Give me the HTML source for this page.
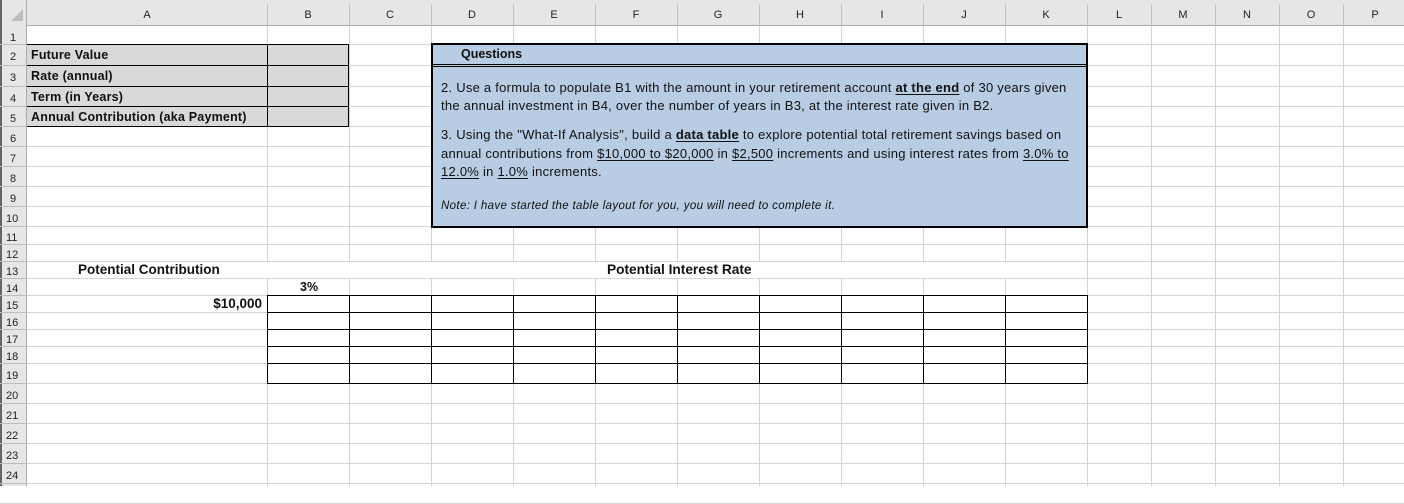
<!DOCTYPE html>
<html><head><meta charset="utf-8">
<style>
body{margin:0;width:1404px;height:486px;overflow:hidden;background:#fff;position:relative;font-family:"Liberation Sans",Arial,sans-serif}
.a{position:absolute}
.hl{position:absolute;height:1px;background:#d4d4d4}
.vl{position:absolute;width:1px;background:#d4d4d4}
.ch{position:absolute;top:0;height:26px;line-height:30px;text-align:center;font-size:11px;color:#222}
.rh{position:absolute;left:0;width:27px;font-size:11px;color:#222;padding-left:10px;box-sizing:border-box}
.lbl{position:absolute;font-weight:bold;font-size:12.5px;color:#111;letter-spacing:0.2px;white-space:nowrap}
.bx{position:absolute;font-size:13px;color:#111;letter-spacing:0.25px;white-space:nowrap}
.lw{position:absolute;font-weight:bold;font-size:13.5px;color:#111;white-space:nowrap}
u{text-underline-offset:2px}
</style></head><body>
<div class="a" style="left:0;top:0;width:1404px;height:26px;background:#e6e6e6;border-bottom:1px solid #ababab;box-sizing:border-box"></div>
<div class="a" style="left:0;top:0;width:27px;height:486px;background:#e6e6e6;border-right:1px solid #ababab;box-sizing:border-box"></div>
<div class="a" style="left:0;top:0;width:2px;height:486px;background:#666"></div>
<svg class="a" style="left:10px;top:8px" width="14" height="14"><polygon points="13,1 13,13 1,13" fill="#bdbdbd"/></svg>
<div id="g"></div>

<div class="a" style="left:27px;top:44px;width:322px;height:82px;background:#d9d9d9"></div>
<div class="a" style="left:27px;top:44px;width:322px;height:83px;border:1px solid #000;border-left:none;box-sizing:border-box"></div>
<div class="a" style="left:27px;top:65px;width:322px;height:1px;background:#000"></div>
<div class="a" style="left:27px;top:86px;width:322px;height:1px;background:#000"></div>
<div class="a" style="left:27px;top:106px;width:322px;height:1px;background:#000"></div>
<div class="a" style="left:267px;top:44px;width:1px;height:82px;background:#000"></div>
<div class="lbl" style="left:31px;top:48px">Future Value</div>
<div class="lbl" style="left:31px;top:69px">Rate (annual)</div>
<div class="lbl" style="left:31px;top:90px">Term (in Years)</div>
<div class="lbl" style="left:31px;top:110px">Annual Contribution (aka Payment)</div>

<div class="a" style="left:431px;top:43px;width:657px;height:185px;background:#b8cce4;border:2px solid #000;box-sizing:border-box"></div>
<div class="a" style="left:432px;top:64px;width:655px;height:1px;background:#000"></div>
<div class="a" style="left:432px;top:66px;width:655px;height:1px;background:#000"></div>
<div class="bx" style="left:461px;top:47px;font-weight:bold;font-size:12.5px;letter-spacing:0">Questions</div>
<div class="bx" style="left:441px;top:80px">2. Use a formula to populate B1 with the amount in your retirement account <b><u>at the end</u></b> of 30 years given</div>
<div class="bx" style="left:441px;top:98px">the annual investment in B4, over the number of years in B3, at the interest rate given in B2.</div>
<div class="bx" style="left:441px;top:127px">3. Using the "What-If Analysis", build a <b><u>data table</u></b> to explore potential total retirement savings based on</div>
<div class="bx" style="left:441px;top:146px">annual contributions from <u>$10,000 to $20,000</u> in <u>$2,500</u> increments and using interest rates from <u>3.0% to</u></div>
<div class="bx" style="left:441px;top:164px"><u>12.0%</u> in <u>1.0%</u> increments.</div>
<div class="bx" style="left:441px;top:200px;font-style:italic;font-size:11.5px;letter-spacing:0.35px">Note: I have started the table layout for you, you will need to complete it.</div>

<div class="lw" style="left:78px;top:262px">Potential Contribution</div>
<div class="lw" style="left:607px;top:262px;font-size:13.7px">Potential Interest Rate</div>
<div class="lw" style="left:300px;top:280px;font-size:12.5px">3%</div>
<div class="lw" style="left:162px;width:100px;text-align:right;top:296px">$10,000</div>
<div id="t"></div>
<script>
var cx=[27,267,349,431,513,595,677,759,841,923,1005,1087,1151,1215,1279,1343,1407];
var ry=[26,44,65,86,106,126,146,166,186,206,226,244,261,278,295,312,329,346,363,383,403,423,443,463,483,503];
var h='';
for(var i=1;i<ry.length;i++){h+='<div class="hl" style="left:0;top:'+ry[i]+'px;width:1404px"></div>';}
for(var j=1;j<cx.length;j++){
 var x=cx[j];
 if(x>=267&&x<1087){h+='<div class="vl" style="left:'+x+'px;top:26px;height:235px"></div><div class="vl" style="left:'+x+'px;top:278px;height:208px"></div>';}
 else h+='<div class="vl" style="left:'+x+'px;top:26px;height:460px"></div>';
 h+='<div class="vl" style="left:'+x+'px;top:4px;height:22px;background:#c0c0c0"></div>';
}
var L='ABCDEFGHIJKLMNOP';
for(var j=0;j<16;j++){h+='<div class="ch" style="left:'+cx[j]+'px;width:'+(cx[j+1]-cx[j])+'px">'+L[j]+'</div>';}
for(var i=0;i<24;i++){var t=ry[i],b=ry[i+1];h+='<div class="rh" style="top:'+t+'px;height:'+(b-t)+'px;line-height:'+(b-t+6)+'px;'+(i>=9?'padding-left:6px':'')+'">'+(i+1)+'</div>';h+='<div class="a" style="left:0;top:'+b+'px;width:27px;height:1px;background:#bdbdbd"></div>';}
document.getElementById('g').innerHTML=h;
var t='';
var rs=[295,312,329,346,363,383];
for(var i=0;i<rs.length;i++)t+='<div class="a" style="left:267px;top:'+rs[i]+'px;width:821px;height:1px;background:#000"></div>';
for(var j=1;j<=11;j++)t+='<div class="a" style="left:'+cx[j]+'px;top:295px;width:1px;height:89px;background:#000"></div>';
document.getElementById('t').innerHTML=t;
</script>
</body></html>
